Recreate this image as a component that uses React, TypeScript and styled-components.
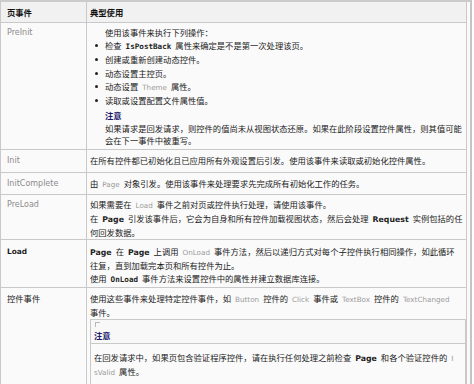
import React from "react";
import styled, { createGlobalStyle } from "styled-components";

const GlobalStyle = createGlobalStyle`
  html, body { margin: 0; padding: 0; background: #ffffff; }
  body {
    font-family: "Noto Sans CJK SC", "Noto Sans", sans-serif;
    font-size: 8.3px;
    color: #1a1a1a;
  }
`;

const Frame = styled.div`
  width: 470px;
  height: 382px;
  overflow: hidden;
  background: #fafafa;
  border-top: 2px solid #cbcbcb;
  border-right: 2px solid #c4c4c4;
`;

const Table = styled.table`
  width: 467px;
  table-layout: fixed;
  border-collapse: collapse;
`;

const HeadCell = styled.th<{ $first?: boolean }>`
  box-sizing: border-box;
  width: ${(p) => (p.$first ? "86px" : "auto")};
  height: 20px;
  padding: 1px 0 0 ${(p) => (p.$first ? 6 : 3)}px;
  text-align: left;
  font-weight: bold;
  background: #f1f1f1;
  border: 1px solid #c9c9c9;
  border-top: none;
  line-height: 13px;
  color: #111;
`;

const Row = styled.tr<{ $h: number }>`
  height: ${(p) => p.$h}px;
`;

const Name = styled.td<{ $strong?: boolean; $pad?: number }>`
  vertical-align: top;
  padding: ${(p) => p.$pad ?? 3}px 0 0 6px;
  border: 1px solid #c9c9c9;
  font-family: "DejaVu Sans", sans-serif;
  font-size: ${(p) => (p.$strong ? 7.4 : 8)}px;
  font-weight: ${(p) => (p.$strong ? "bold" : "normal")};
  color: ${(p) => (p.$strong ? "#1e1e1e" : "#8c8c8c")};
  line-height: 13px;
`;

const CjkName = styled(Name)`
  font-family: "Noto Sans CJK SC", sans-serif;
  font-size: 8.3px;
  color: #222;
`;

const Body = styled.td<{ $pad?: number; $indent?: number }>`
  vertical-align: top;
  padding: ${(p) => p.$pad ?? 3}px 0 0 ${(p) => p.$indent ?? 3}px;
  border: 1px solid #c9c9c9;
  line-height: 13px;
  white-space: nowrap;
`;

const Line = styled.div<{ $lh?: number }>`
  line-height: ${(p) => p.$lh ?? 13}px;
`;

const Bullets = styled.ul`
  list-style: none;
  margin: 0;
  padding: 0;
`;

const Bullet = styled.li`
  position: relative;
  line-height: 13.4px;
  &::before {
    content: "";
    position: absolute;
    left: -10px;
    top: 5px;
    width: 3px;
    height: 3px;
    border-radius: 50%;
    background: #222;
  }
`;

const NoteTitle = styled.div`
  font-weight: bold;
  color: #1b1b6b;
  line-height: 14px;
`;

const Code = styled.span<{ $tone: "gray" | "bold" | "mono" }>`
  font-family: ${(p) => (p.$tone === "mono" ? '"DejaVu Sans Mono", monospace' : '"DejaVu Sans", sans-serif')};
  font-size: ${(p) => (p.$tone === "mono" ? 7.6 : p.$tone === "bold" ? 7.8 : 7.2)}px;
  font-weight: ${(p) => (p.$tone === "gray" ? "normal" : "bold")};
  color: ${(p) => (p.$tone === "gray" ? "#9b9b9b" : "#1e1e1e")};
  margin: 0 4px;
`;

const NoteBox = styled.div`
  margin: 0;
  border: 1px solid #c9c9c9;
  background: #f8f8f8;
`;

const NoteHead = styled.div`
  padding: 0 3px 1px;
  border-bottom: 1px solid #c9c9c9;
`;

const NoteBody = styled.div`
  padding: 7px 3px 5px;
  background: #fafafa;
`;

const Broken = styled.span`
  display: block;
  width: 4px;
  height: 4px;
  margin: 2px 0 1px 1px;
  border-top: 1px solid #b8b8b8;
  border-left: 1px solid #b8b8b8;
`;

export default function App() {
  return (
    <>
      <GlobalStyle />
      <Frame>
        <Table>
          <thead>
            <tr>
              <HeadCell $first>页事件</HeadCell>
              <HeadCell>典型使用</HeadCell>
            </tr>
          </thead>
          <tbody>
            <Row $h={127}>
              <Name>PreInit</Name>
              <Body $indent={18}>
                <Line $lh={13.25}>使用该事件来执行下列操作：</Line>
                <Bullets>
                  <Bullet>检查<Code $tone="mono">IsPostBack</Code>属性来确定是不是第一次处理该页。</Bullet>
                  <Bullet>创建或重新创建动态控件。</Bullet>
                  <Bullet>动态设置主控页。</Bullet>
                  <Bullet>动态设置<Code $tone="gray">Theme</Code>属性。</Bullet>
                  <Bullet>读取或设置配置文件属性值。</Bullet>
                </Bullets>
                <NoteTitle>注意</NoteTitle>
                <Line $lh={12.5}>如果请求是回发请求，则控件的值尚未从视图状态还原。如果在此阶段设置控件属性，则其值可能</Line>
                <Line $lh={12.5}>会在下一事件中被重写。</Line>
              </Body>
            </Row>
            <Row $h={23}>
              <Name $pad={4}>Init</Name>
              <Body $pad={4}>在所有控件都已初始化且已应用所有外观设置后引发。使用该事件来读取或初始化控件属性。</Body>
            </Row>
            <Row $h={22}>
              <Name $pad={4}>InitComplete</Name>
              <Body $pad={4}>
                由<Code $tone="gray">Page</Code>对象引发。使用该事件来处理要求先完成所有初始化工作的任务。
              </Body>
            </Row>
            <Row $h={44}>
              <Name>PreLoad</Name>
              <Body>
                <Line>如果需要在<Code $tone="gray">Load</Code>事件之前对页或控件执行处理，请使用该事件。</Line>
                <Line>
                  在<Code $tone="bold">Page</Code>引发该事件后，它会为自身和所有控件加载视图状态，然后会处理<Code $tone="bold">Request</Code>实例包括的任
                </Line>
                <Line>何回发数据。</Line>
              </Body>
            </Row>
            <Row $h={48}>
              <Name $strong $pad={5}>Load</Name>
              <Body $pad={5}>
                <Line>
                  <Code $tone="bold" style={{ marginLeft: 0 }}>Page</Code>在<Code $tone="bold">Page</Code>上调用<Code $tone="gray">OnLoad</Code>事件方法，然后以递归方式对每个子控件执行相同操作，如此循环
                </Line>
                <Line>往复，直到加载完本页和所有控件为止。</Line>
                <Line>
                  使用<Code $tone="mono">OnLoad</Code>事件方法来设置控件中的属性并建立数据库连接。
                </Line>
              </Body>
            </Row>
            <Row $h={96}>
              <CjkName $pad={4}>控件事件</CjkName>
              <Body $pad={4}>
                <Line>
                  使用这些事件来处理特定控件事件，如<Code $tone="gray">Button</Code>控件的<Code $tone="gray">Click</Code>事件或<Code $tone="gray">TextBox</Code>控件的<Code $tone="gray">TextChanged</Code>
                </Line>
                <Line>事件。</Line>
                <NoteBox>
                  <NoteHead>
                    <Broken />
                    <NoteTitle>注意</NoteTitle>
                  </NoteHead>
                  <NoteBody>
                    <Line>
                      在回发请求中，如果页包含验证程序控件，请在执行任何处理之前检查<Code $tone="bold">Page</Code>和各个验证控件的<Code $tone="gray">I</Code>
                    </Line>
                    <Line>
                      <Code $tone="gray" style={{ marginLeft: 0 }}>sValid</Code>属性。
                    </Line>
                  </NoteBody>
                </NoteBox>
              </Body>
            </Row>
          </tbody>
        </Table>
      </Frame>
    </>
  );
}
